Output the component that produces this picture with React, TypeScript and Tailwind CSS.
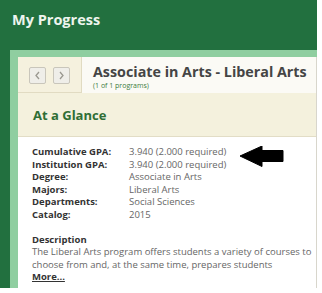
import React from 'react';

const details: [string, string][] = [
  ['Cumulative GPA:', '3.940 (2.000 required)'],
  ['Institution GPA:', '3.940 (2.000 required)'],
  ['Degree:', 'Associate in Arts'],
  ['Majors:', 'Liberal Arts'],
  ['Departments:', 'Social Sciences'],
  ['Catalog:', '2015'],
];

const NavButton = ({ dir }: { dir: 'left' | 'right' }) => (
  <button className="w-[17px] h-[17px] rounded-[2px] border border-[#c9c6bb] bg-[#efeee9] flex items-center justify-center">
    <svg width="7" height="9" viewBox="0 0 7 9" fill="none" stroke="#9a9890" strokeWidth="1.3">
      {dir === 'left' ? <path d="M5 1 L2 4.5 L5 8" /> : <path d="M2 1 L5 4.5 L2 8" />}
    </svg>
  </button>
);

export default function App() {
  return (
    <div className="w-[322px] h-[293px] bg-white" style={{ fontFamily: '"Open Sans", sans-serif' }}>
      <div className="w-[317px] h-[288px] bg-[#22703f] overflow-hidden flex flex-col">
        {/* Header */}
        <div className="h-[50px] shrink-0 pl-[12px] pt-[10px]">
          <h1 className="text-[14.5px] font-bold leading-[20px] text-[#eef5ee]">My Progress</h1>
        </div>

        {/* Light band */}
        <div className="flex-1 ml-[10px] pt-[7px] pl-[8px] bg-[#8fcea0] flex flex-col">
          <div className="flex-1 bg-white relative flex flex-col border-r border-[#d8d6cc]">
            {/* Program selector row */}
            <div className="flex h-[36px] shrink-0 bg-[#fbfaf5]">
              <div className="w-[64px] bg-[#f5f1de] border-r border-b border-[#e1dbc2] flex items-start gap-[7px] pl-[11px] pt-[10px]">
                <NavButton dir="left" />
                <NavButton dir="right" />
              </div>
              <div className="pl-[11px] pt-[5px]">
                <h2 className="text-[14.3px] font-bold leading-[19px] text-[#454545]">
                  Associate in Arts - Liberal Arts
                </h2>
                <p className="text-[7px] leading-[9px] text-[#3d7c40]">(1 of 1 programs)</p>
              </div>
            </div>

            {/* At a Glance */}
            <div className="h-[44px] shrink-0 bg-[#f4f1dd] border-b border-[#e2ddc6] pl-[15px] flex items-center pt-[2px]">
              <h3 className="text-[13px] font-bold text-[#2f6e35]">At a Glance</h3>
            </div>

            {/* Details */}
            <div className="pl-[14px] pt-[9px] text-[9.5px] leading-[12.6px]">
              {details.map(([label, value]) => (
                <div key={label} className="flex">
                  <span className="w-[97px] shrink-0 font-bold text-[#333]">{label}</span>
                  <span className="text-[#666]">{value}</span>
                </div>
              ))}

              <div className="mt-[12px] font-bold text-[#333]">Description</div>
              <p className="text-[#666]">
                The Liberal Arts program offers students a variety of courses to choose from and, at the same time, prepares students
              </p>
              <a className="font-bold text-[#333] underline">More...</a>
            </div>

            {/* Annotation arrow */}
            <svg className="absolute left-[222px] top-[89px]" width="44" height="21" viewBox="0 0 44 21">
              <polygon points="0,10 22,0 22,4.5 43,4.5 43,15.5 22,15.5 22,20.5" fill="#000" strokeLinejoin="round" stroke="#000" strokeWidth="1" />
            </svg>
          </div>
        </div>
      </div>
    </div>
  );
}
